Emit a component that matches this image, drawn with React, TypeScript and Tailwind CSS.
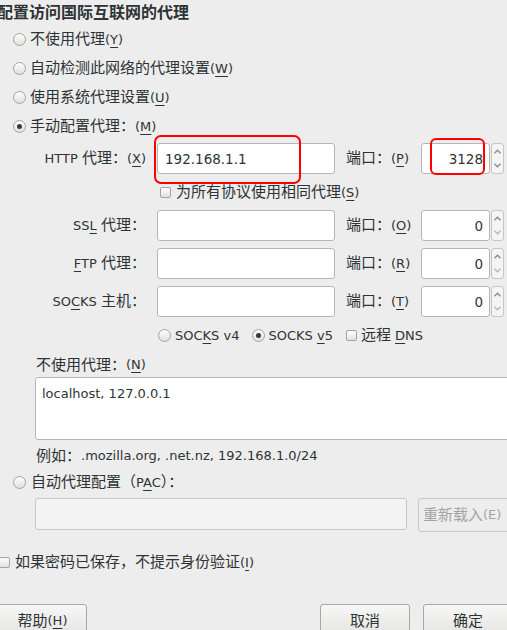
import React from 'react';
import clsx from 'clsx';

// '_' in a label marks the mnemonic letter that follows it
const CJK = /[\u2e80-\u9fff\u3000-\u303f\uff00-\uffef]/;

function Txt({ s }: { s: string }) {
  const runs: { cjk: boolean; u: boolean; t: string }[] = [];
  for (let i = 0; i < s.length; i++) {
    let ch = s[i];
    let u = false;
    if (ch === '_' && i + 1 < s.length) {
      u = true;
      ch = s[++i];
    }
    const cjk = CJK.test(ch);
    const last = runs[runs.length - 1];
    if (last && last.cjk === cjk && last.u === u) last.t += ch;
    else runs.push({ cjk, u, t: ch });
  }
  return (
    <>
      {runs.map((r, k) => (
        <span
          key={k}
          className={clsx(
            r.cjk ? 'text-[15px]' : 'text-[13px]',
            r.u && 'underline decoration-1 underline-offset-[3px]',
          )}
        >
          {r.t}
        </span>
      ))}
    </>
  );
}

function RadioDot({ checked }: { checked?: boolean }) {
  return (
    <span className="flex h-[13px] w-[13px] shrink-0 items-center justify-center rounded-full border border-[#a3a3a0] bg-linear-to-b from-[#fdfdfd] to-[#e0e0de]">
      {checked && <span className="h-[5px] w-[5px] rounded-full bg-[#3a3a3a]" />}
    </span>
  );
}

function CheckBox() {
  return (
    <span className="h-[11px] w-[11px] shrink-0 rounded-[2px] border border-[#a3a3a0] bg-linear-to-b from-[#fdfdfd] to-[#e2e2e0]" />
  );
}

function Chevron({ down, light }: { down?: boolean; light?: boolean }) {
  return (
    <svg width="7" height="5" viewBox="0 0 7 5">
      <polyline
        points={down ? '0.5,0.8 3.5,3.8 6.5,0.8' : '0.5,4.2 3.5,1.2 6.5,4.2'}
        fill="none"
        stroke={light ? '#b8b8b6' : '#8a8a88'}
        strokeWidth="1.3"
      />
    </svg>
  );
}

function TextBox({ value, className }: { value?: string; className?: string }) {
  return (
    <div
      className={clsx(
        'flex h-[31px] items-center rounded-[3px] border border-[#b6b6b2] bg-white pl-[7px] text-[13.5px]',
        className,
      )}
    >
      {value}
    </div>
  );
}

function Spin({ value, className }: { value: string; className?: string }) {
  return (
    <div className={clsx('flex h-[31px]', className)}>
      <div className="flex w-[69px] items-center justify-end rounded-[3px] border border-[#b6b6b2] bg-white pr-[6px] text-[13.5px]">
        {value}
      </div>
      <div className="ml-[1px] flex w-[13px] flex-col rounded-[3px] border border-[#c6c6c3] bg-[#f4f4f3]">
        <div className="flex flex-1 items-center justify-center">
          <Chevron />
        </div>
        <div className="flex flex-1 items-center justify-center">
          <Chevron down light={value === '0'} />
        </div>
      </div>
    </div>
  );
}

function ProxyRow({ label, host, portLabel, port, className }: {
  label: string;
  host?: string;
  portLabel: string;
  port: string;
  className?: string;
}) {
  return (
    <div className={clsx('flex items-center', className)}>
      <div className="w-[146px] text-right whitespace-nowrap">
        <Txt s={label} />
      </div>
      <TextBox className="ml-[11px] w-[178px]" value={host} />
      <div className="ml-[11px] w-[65px] whitespace-nowrap">
        <Txt s={portLabel} />
      </div>
      <Spin className="ml-[10px]" value={port} />
    </div>
  );
}

function Button({ label, className, disabled }: { label: string; className?: string; disabled?: boolean }) {
  return (
    <div
      className={clsx(
        'flex h-[34px] shrink-0 items-center rounded-[3px] border whitespace-nowrap',
        disabled
          ? 'justify-start border-[#c8c8c5] bg-[#ededed] pl-[4px] text-[#a4a4a2]'
          : 'justify-center border-[#a8a8a5] bg-linear-to-b from-[#f7f7f7] to-[#e3e3e1]',
        className,
      )}
    >
      <Txt s={label} />
    </div>
  );
}

export default function App() {
  return (
    <div className="relative h-[630px] w-[507px] overflow-hidden bg-[#ededed] font-['DejaVu_Sans','Noto_Sans_CJK_SC',sans-serif] leading-[18px] text-[#2e3436]">
      <div className="ml-[-3px] flex h-[25px] items-center text-[16px] font-bold whitespace-nowrap">
        配置访问国际互联网的代理
      </div>

      {[
        ['不使用代理(_Y)', false],
        ['自动检测此网络的代理设置(_W)', false],
        ['使用系统代理设置(_U)', false],
        ['手动配置代理：(_M)', true],
      ].map(([label, checked]) => (
        <div key={label as string} className="flex h-[29px] items-center gap-[4px] pl-[13px]">
          <RadioDot checked={checked as boolean} />
          <span className="whitespace-nowrap">
            <Txt s={label as string} />
          </span>
        </div>
      ))}

      <ProxyRow className="mt-[2px]" label="HTTP 代理：(_X)" host="192.168.1.1" portLabel="端口：(_P)" port="3128" />

      <div className="flex h-[36px] items-center gap-[5px] pl-[160px]">
        <CheckBox />
        <span className="whitespace-nowrap">
          <Txt s="为所有协议使用相同代理(_S)" />
        </span>
      </div>

      <ProxyRow label="SS_L 代理：" portLabel="端口：(_O)" port="0" />
      <ProxyRow className="mt-[7px]" label="_FTP 代理：" portLabel="端口：(_R)" port="0" />
      <ProxyRow className="mt-[7px]" label="SO_CKS 主机：" portLabel="端口：(_T)" port="0" />

      <div className="flex h-[37px] items-center pl-[158px] whitespace-nowrap">
        <RadioDot />
        <span className="ml-[4px]">
          <Txt s="SOC_KS v4" />
        </span>
        <span className="ml-[13px]">
          <RadioDot checked />
        </span>
        <span className="ml-[3px]">
          <Txt s="SOCKS _v5" />
        </span>
        <span className="ml-[13px] flex">
          <CheckBox />
        </span>
        <span className="ml-[4px]">
          <Txt s="远程 _DNS" />
        </span>
      </div>

      <div className="flex h-[21px] items-center pl-[36px]">
        <Txt s="不使用代理：(_N)" />
      </div>
      <div className="mt-[2px] ml-[35px] h-[63px] w-[490px] rounded-[3px] border border-[#b6b6b2] bg-white pt-[7px] pl-[6px] text-[13px]">
        localhost, 127.0.0.1
      </div>

      <div className="flex h-[32px] items-center pl-[36px] whitespace-nowrap">
        <Txt s="例如：.mozilla.org, .net.nz, 192.168.1.0/24" />
      </div>

      <div className="flex h-[20px] items-center gap-[5px] pl-[13px] whitespace-nowrap">
        <RadioDot />
        <span>
          <Txt s="自动代理配置（P_AC）：" />
        </span>
      </div>

      <div className="mt-[6px] flex">
        <div className="ml-[35px] h-[32px] w-[372px] shrink-0 rounded-[3px] border border-[#c6c6c3] bg-[#f3f3f3]" />
        <Button className="ml-[11px] h-[32px] w-[95px]" label="重新载入(E)" disabled />
      </div>

      <div className="mt-[14px] ml-[-1px] flex h-[32px] items-center gap-[5px] whitespace-nowrap">
        <CheckBox />
        <span>
          <Txt s="如果密码已保存，不提示身份验证(_I)" />
        </span>
      </div>

      <div className="mt-[26px] flex">
        <Button className="ml-[-2px] w-[89px]" label="帮助(_H)" />
        <Button className="ml-[233px] w-[90px]" label="取消" />
        <Button className="ml-[13px] w-[90px]" label="确定" />
      </div>

      {/* red annotation marks */}
      <div className="absolute top-[135px] left-[154px] h-[49px] w-[147px] rounded-[7px] border-2 border-[#f00]" />
      <div className="absolute top-[138px] left-[430px] h-[37px] w-[55px] rounded-[6px] border-2 border-[#f00]" />
    </div>
  );
}
